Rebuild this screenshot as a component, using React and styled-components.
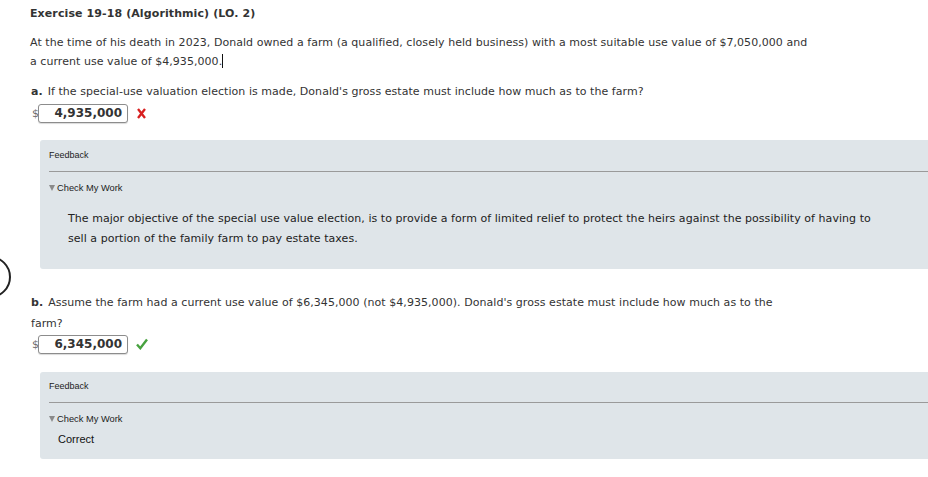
import React from "react";
import styled, { createGlobalStyle } from "styled-components";

const GlobalStyle = createGlobalStyle`
  html, body {
    margin: 0;
    padding: 0;
    background: #ffffff;
    overflow: hidden;
  }
  body {
    font-family: "DejaVu Sans", Verdana, sans-serif;
    color: #333333;
  }
`;

const Page = styled.div`
  position: relative;
  width: 928px;
  height: 477px;
  padding: 4px 0 0 30px;
  box-sizing: border-box;
`;

const Title = styled.h1`
  margin: 0;
  font-size: 11px;
  line-height: 20px;
  font-weight: bold;
  letter-spacing: 0.1px;
  color: #333333;
  white-space: nowrap;
`;

const Para = styled.p`
  margin: ${(p) => p.$mt || 0}px 0 0 ${(p) => p.$ml || 0}px;
  font-size: 11px;
  line-height: ${(p) => p.$lh || 20}px;
  letter-spacing: 0.05px;
  white-space: nowrap;
  color: #333333;
`;

const Caret = styled.span`
  display: inline-block;
  width: 0;
  height: 14px;
  border-left: 1px solid #111;
  vertical-align: -3px;
`;

const Label = styled.b`
  font-weight: bold;
  margin-right: 5px;
`;

const AnswerRow = styled.div`
  display: flex;
  align-items: center;
  margin: ${(p) => p.$mt}px 0 0 2px;
  height: 20px;
`;

const Dollar = styled.span`
  font-size: 11px;
  color: #6f6f6f;
  margin-right: -1px;
`;

const ValueBox = styled.div`
  box-sizing: border-box;
  width: 90px;
  height: 19px;
  border: 1px solid #8c8c8c;
  border-radius: 3px;
  box-shadow: 0 1px 1px rgba(0, 0, 0, 0.15);
  font-size: 12px;
  font-weight: bold;
  color: #333333;
  text-align: right;
  padding-right: 5px;
  line-height: 17px;
  background: #fff;
`;

const Mark = styled.span`
  display: inline-flex;
  margin-left: ${(p) => p.$ml}px;
`;

const Panel = styled.section`
  margin: ${(p) => p.$mt}px -40px 0 10px;
  background: #dfe5e9;
  border-radius: 3px 0 0 3px;
  padding: ${(p) => p.$pt}px 0 ${(p) => p.$pb}px 9px;
`;

const PanelHead = styled.div`
  font-family: "Liberation Sans", Arial, sans-serif;
  font-size: 9px;
  line-height: 14px;
  color: #222222;
`;

const Divider = styled.hr`
  margin: 9px 0 0 0;
  border: 0;
  height: 1px;
  background: #9a9a9a;
`;

const Toggle = styled.div`
  margin-top: 9px;
  display: flex;
  align-items: center;
  font-family: "Liberation Sans", Arial, sans-serif;
  font-size: 9.3px;
  line-height: 14px;
  color: #222222;
`;

const Triangle = styled.span`
  width: 0;
  height: 0;
  border-left: 3.5px solid transparent;
  border-right: 3.5px solid transparent;
  border-top: 6px solid #8a8a8a;
  margin: 0 2px 0 0;
`;

const Explanation = styled.p`
  margin: 14px 0 0 19px;
  font-size: 11px;
  line-height: 20px;
  letter-spacing: 0.05px;
  color: #222222;
  white-space: nowrap;
`;

const Correct = styled.p`
  margin: 5px 0 0 9px;
  font-family: "Liberation Sans", Arial, sans-serif;
  font-size: 11px;
  line-height: 16px;
  color: #111111;
`;

const EdgeCircle = styled.div`
  position: absolute;
  left: -31px;
  top: 256px;
  width: 38px;
  height: 38px;
  border: 2px solid #222;
  border-radius: 50%;
`;

const Cross = () => (
  <svg width="9" height="11" viewBox="0 0 9 11">
    <path d="M1 1 L8 10 M8 1 L1 10" stroke="#d81f1f" strokeWidth="2.3" strokeLinecap="butt" />
  </svg>
);

const Check = () => (
  <svg width="12" height="12" viewBox="0 0 12 12">
    <path d="M1 6.5 L4.3 10.2 L11 1.5" stroke="#47a23f" strokeWidth="2.4" fill="none" strokeLinejoin="miter" />
  </svg>
);

const Feedback = ({ mt, pt, pb, children }) => (
  <Panel $mt={mt} $pt={pt} $pb={pb}>
    <PanelHead>Feedback</PanelHead>
    <Divider />
    <Toggle>
      <Triangle />
      Check My Work
    </Toggle>
    {children}
  </Panel>
);

export default function App() {
  return (
    <>
      <GlobalStyle />
      <Page>
        <Title>Exercise 19-18 (Algorithmic) (LO. 2)</Title>
        <Para $mt={9} $lh={19}>
          At the time of his death in 2023, Donald owned a farm (a qualified, closely held business) with a most suitable use value of $7,050,000 and
          <br />
          a current use value of $4,935,000.<Caret />
        </Para>
        <Para $mt={11} $ml={1}>
          <Label>a.</Label>If the special-use valuation election is made, Donald's gross estate must include how much as to the farm?
        </Para>
        <AnswerRow $mt={1}>
          <Dollar>$</Dollar>
          <ValueBox>4,935,000</ValueBox>
          <Mark $ml={9}>
            <Cross />
          </Mark>
        </AnswerRow>
        <Feedback mt={17} pt={8} pb={20}>
          <Explanation>
            The major objective of the special use value election, is to provide a form of limited relief to protect the heirs against the possibility of having to
            <br />
            sell a portion of the family farm to pay estate taxes.
          </Explanation>
        </Feedback>
        <Para $mt={23} $ml={1} $lh={21}>
          <Label>b.</Label>Assume the farm had a current use value of $6,345,000 (not $4,935,000). Donald's gross estate must include how much as to the
          <br />
          farm?
        </Para>
        <AnswerRow $mt={0}>
          <Dollar>$</Dollar>
          <ValueBox>6,345,000</ValueBox>
          <Mark $ml={8}>
            <Check />
          </Mark>
        </AnswerRow>
        <Feedback mt={18} pt={7} pb={12}>
          <Correct>Correct</Correct>
        </Feedback>
        <EdgeCircle />
      </Page>
    </>
  );
}
